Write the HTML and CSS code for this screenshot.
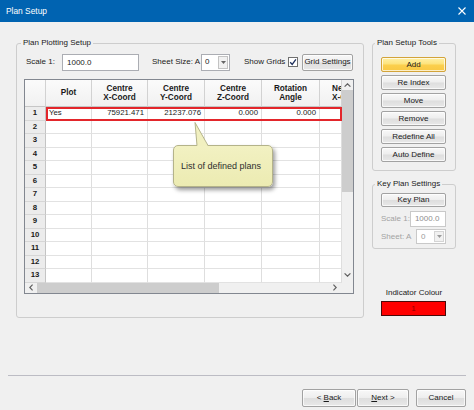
FILE: index.html
```html
<!DOCTYPE html>
<html>
<head>
<meta charset="utf-8">
<title>Plan Setup</title>
<link rel="stylesheet" href="styles.css">
</head>
<body>
<div class="window">
  <div class="titlebar">
    <span class="title">Plan Setup</span>
    <svg class="close" width="8" height="8" viewBox="0 0 8 8"><path d="M0.5 0.5L7.5 7.5M7.5 0.5L0.5 7.5" stroke="#ffffff" stroke-width="1.1" fill="none"/></svg>
  </div>
  <div class="content">
    <div class="main">
      <fieldset class="group plot-group">
        <legend>Plan Plotting Setup</legend>
        <div class="toolbar">
          <span class="lbl lbl-scale">Scale 1:</span>
          <div class="textbox tb-scale">1000.0</div>
          <span class="lbl lbl-sheet">Sheet Size: A</span>
          <div class="combo combo-sheet"><span class="combo-val">0</span><span class="drop"><svg width="5" height="3" viewBox="0 0 5 3"><path d="M0 0H5L2.5 3Z" fill="#666"/></svg></span></div>
          <span class="lbl lbl-grids">Show Grids</span>
          <span class="check"><svg width="10" height="10" viewBox="0 0 10 10"><rect x="0.5" y="0.5" width="9" height="9" fill="#ffffff" stroke="#707070"/><path d="M2.2 5.2L4.2 7.4L7.9 2.4" stroke="#1d2f5c" stroke-width="1.3" fill="none"/></svg></span>
          <button class="btn btn-grid">Grid Settings</button>
        </div>
        <div class="grid">
          <div class="grid-main">
            <div class="viewport">
              <div class="row head">
                <div class="cell c0"></div>
                <div class="cell c1"><span>Plot</span></div>
                <div class="cell c2"><span>Centre</span><span>X-Coord</span></div>
                <div class="cell c3"><span>Centre</span><span>Y-Coord</span></div>
                <div class="cell c4"><span>Centre</span><span>Z-Coord</span></div>
                <div class="cell c5"><span>Rotation</span><span>Angle</span></div>
                <div class="cell c6"><span>New</span><span>X-Coord</span></div>
              </div>
              <div class="row sel">
                <div class="cell c0 rh">1</div>
                <div class="cell c1">Yes</div>
                <div class="cell c2 num">75921.471</div>
                <div class="cell c3 num">21237.076</div>
                <div class="cell c4 num">0.000</div>
                <div class="cell c5 num">0.000</div>
                <div class="cell c6"></div>
              </div>
              <div class="row"><div class="cell c0 rh">2</div><div class="cell c1"></div><div class="cell c2"></div><div class="cell c3"></div><div class="cell c4"></div><div class="cell c5"></div><div class="cell c6"></div></div>
              <div class="row"><div class="cell c0 rh">3</div><div class="cell c1"></div><div class="cell c2"></div><div class="cell c3"></div><div class="cell c4"></div><div class="cell c5"></div><div class="cell c6"></div></div>
              <div class="row"><div class="cell c0 rh">4</div><div class="cell c1"></div><div class="cell c2"></div><div class="cell c3"></div><div class="cell c4"></div><div class="cell c5"></div><div class="cell c6"></div></div>
              <div class="row"><div class="cell c0 rh">5</div><div class="cell c1"></div><div class="cell c2"></div><div class="cell c3"></div><div class="cell c4"></div><div class="cell c5"></div><div class="cell c6"></div></div>
              <div class="row"><div class="cell c0 rh">6</div><div class="cell c1"></div><div class="cell c2"></div><div class="cell c3"></div><div class="cell c4"></div><div class="cell c5"></div><div class="cell c6"></div></div>
              <div class="row"><div class="cell c0 rh">7</div><div class="cell c1"></div><div class="cell c2"></div><div class="cell c3"></div><div class="cell c4"></div><div class="cell c5"></div><div class="cell c6"></div></div>
              <div class="row"><div class="cell c0 rh">8</div><div class="cell c1"></div><div class="cell c2"></div><div class="cell c3"></div><div class="cell c4"></div><div class="cell c5"></div><div class="cell c6"></div></div>
              <div class="row"><div class="cell c0 rh">9</div><div class="cell c1"></div><div class="cell c2"></div><div class="cell c3"></div><div class="cell c4"></div><div class="cell c5"></div><div class="cell c6"></div></div>
              <div class="row"><div class="cell c0 rh">10</div><div class="cell c1"></div><div class="cell c2"></div><div class="cell c3"></div><div class="cell c4"></div><div class="cell c5"></div><div class="cell c6"></div></div>
              <div class="row"><div class="cell c0 rh">11</div><div class="cell c1"></div><div class="cell c2"></div><div class="cell c3"></div><div class="cell c4"></div><div class="cell c5"></div><div class="cell c6"></div></div>
              <div class="row"><div class="cell c0 rh">12</div><div class="cell c1"></div><div class="cell c2"></div><div class="cell c3"></div><div class="cell c4"></div><div class="cell c5"></div><div class="cell c6"></div></div>
              <div class="row"><div class="cell c0 rh">13</div><div class="cell c1"></div><div class="cell c2"></div><div class="cell c3"></div><div class="cell c4"></div><div class="cell c5"></div><div class="cell c6"></div></div>
            </div>
            <div class="vscroll">
              <div class="arrow-up"><svg width="7" height="4" viewBox="0 0 7 4"><path d="M0.6 3.6L3.5 0.8L6.4 3.6" stroke="#606060" stroke-width="1.2" fill="none"/></svg></div>
              <div class="vthumb"></div>
              <div class="vspace"></div>
              <div class="arrow-down"><svg width="7" height="4" viewBox="0 0 7 4"><path d="M0.6 0.4L3.5 3.2L6.4 0.4" stroke="#606060" stroke-width="1.2" fill="none"/></svg></div>
            </div>
          </div>
          <div class="hscroll-row">
            <div class="hscroll">
              <div class="arrow-left"><svg width="4" height="7" viewBox="0 0 4 7"><path d="M3.6 0.6L0.8 3.5L3.6 6.4" stroke="#606060" stroke-width="1.2" fill="none"/></svg></div>
              <div class="hthumb"></div>
              <div class="hspace"></div>
              <div class="arrow-right"><svg width="4" height="7" viewBox="0 0 4 7"><path d="M0.4 0.6L3.2 3.5L0.4 6.4" stroke="#606060" stroke-width="1.2" fill="none"/></svg></div>
            </div>
            <div class="corner"></div>
          </div>
          <div class="tooltip">
            <svg class="tail" width="16" height="24" viewBox="0 0 16 24"><polygon points="1,0 3,24 14,24" fill="#f1f0c0"/><polyline points="3,23.5 1,0.5 14,23.5" fill="none" stroke="#b4b38a" stroke-width="1"/></svg>
            <span>List of defined plans</span>
          </div>
        </div>
      </fieldset>

      <div class="side">
        <fieldset class="group tools">
          <legend>Plan Setup Tools</legend>
          <div class="btn-stack">
            <button class="btn btn-side btn-add">Add</button>
            <button class="btn btn-side">Re Index</button>
            <button class="btn btn-side">Move</button>
            <button class="btn btn-side">Remove</button>
            <button class="btn btn-side">Redefine All</button>
            <button class="btn btn-side">Auto Define</button>
          </div>
        </fieldset>
        <fieldset class="group keyplan">
          <legend>Key Plan Settings</legend>
          <button class="btn btn-side btn-key">Key Plan</button>
          <div class="kp-row kp-scale">
            <span class="lbl disabled">Scale 1:</span>
            <div class="textbox tb-kp">1000.0</div>
          </div>
          <div class="kp-row kp-sheet">
            <span class="lbl disabled">Sheet: A</span>
            <div class="combo combo-kp"><span class="combo-val">0</span><span class="drop"><svg width="5" height="3" viewBox="0 0 5 3"><path d="M0 0H5L2.5 3Z" fill="#9a9a9a"/></svg></span></div>
          </div>
        </fieldset>
        <div class="indicator-label">Indicator Colour</div>
        <div class="swatch">1</div>
      </div>
    </div>
    <div class="separator"></div>
    <div class="footer">
      <button class="btn btn-foot btn-back">&lt; <u>B</u>ack</button>
      <button class="btn btn-foot btn-next"><u>N</u>ext &gt;</button>
      <button class="btn btn-foot btn-cancel">Cancel</button>
    </div>
  </div>
</div>
</body>
</html>
```

FILE: styles.css
```css
* {
  box-sizing: border-box;
}

html, body {
  margin: 0;
  padding: 0;
}

body {
  width: 474px;
  height: 410px;
  overflow: hidden;
  font-family: "Liberation Sans", Arial, sans-serif;
  font-size: 8px;
  color: #1a1a1a;
  background: #f0f0f0;
}

.window {
  width: 474px;
  height: 410px;
  display: flex;
  flex-direction: column;
  background: #f0f0f0;
}

/* Title bar */
.titlebar {
  height: 22px;
  flex: none;
  background: #0063b1;
  color: #ffffff;
  display: flex;
  align-items: center;
  justify-content: space-between;
  padding: 0 8px 0 6px;
}

.title {
  font-size: 8.4px;
  line-height: 10px;
}

.close {
  display: block;
}

/* Content */
.content {
  flex: 1;
  display: flex;
  flex-direction: column;
}

.main {
  display: flex;
  align-items: flex-start;
  padding: 16px 0 0 16px;
}

.group {
  margin: 0;
  border: 1px solid #cdcdcd;
  border-radius: 3px;
  min-width: 0;
}

.group legend {
  padding: 0 2px;
  line-height: 10px;
  font-size: 8px;
  color: #1a1a1a;
}

.plot-group {
  width: 348px;
  padding: 5px 9px 23px 7px;
}

.plot-group legend {
  margin-left: -3px;
}

/* Toolbar */
.toolbar {
  display: flex;
  align-items: center;
  height: 18px;
}

.lbl {
  white-space: nowrap;
  line-height: 10px;
}

.lbl-scale {
  width: 36px;
  margin-left: 2px;
}

.textbox {
  background: #ffffff;
  border: 1px solid #abadb3;
  white-space: nowrap;
}

.tb-scale {
  width: 77px;
  height: 17px;
  line-height: 15px;
  padding-left: 4px;
}

.lbl-sheet {
  width: 49px;
  margin-left: 13px;
}

.combo {
  display: flex;
  align-items: center;
  background: #ffffff;
  border: 1px solid #abadb3;
}

.combo-val {
  flex: 1;
  padding-left: 3px;
  line-height: 10px;
}

.drop {
  width: 10px;
  border: 1px solid #c3c3c3;
  background: #f1f1f1;
  display: flex;
  align-items: center;
  justify-content: center;
  margin-right: 1px;
}

.combo-sheet {
  width: 29px;
  height: 17px;
}

.combo-sheet .drop {
  height: 13px;
}

.lbl-grids {
  width: 43px;
  margin-left: 14px;
}

.check {
  display: flex;
  margin-left: 1px;
}

.check svg {
  display: block;
}

/* Buttons */
.btn {
  font-family: inherit;
  font-size: 8px;
  color: #1a1a1a;
  padding: 0;
  margin: 0;
  border: 1px solid #a2a2a2;
  border-radius: 2px;
  background: linear-gradient(#f8f8f8 0%, #eeeeee 48%, #dedede 52%, #e8e8e8 100%);
  box-shadow: inset 0 0 0 1px rgba(255, 255, 255, 0.7);
  line-height: 10px;
  white-space: nowrap;
}

.btn-grid {
  width: 51px;
  height: 17px;
  margin-left: 4px;
}

/* Grid */
.grid {
  position: relative;
  width: 330px;
  margin-top: 8px;
  border: 1px solid #828790;
  background: #ffffff;
}

.grid-main {
  display: flex;
}

.viewport {
  width: 317px;
  overflow: hidden;
}

.row {
  display: flex;
  height: 13.5px;
}

.cell {
  flex: none;
  height: 100%;
  overflow: hidden;
  white-space: nowrap;
  border-right: 1px solid #dedede;
  border-bottom: 1px solid #e2e2e2;
  padding: 0 3px;
  line-height: 12.5px;
  font-size: 7.8px;
}

.c0 { width: 21px; }
.c1 { width: 46px; }
.c2 { width: 56px; }
.c3 { width: 57px; }
.c4 { width: 57px; }
.c5 { width: 58px; }
.c6 { width: 22px; }

.num {
  text-align: right;
}

.rh {
  background: #ececec;
  font-weight: bold;
  text-align: center;
  padding: 0;
  border-right-color: #c4c4c4;
  border-bottom-color: #d6d6d6;
}

.row.head {
  height: 27px;
}

.head .cell {
  background: linear-gradient(#fbfbfb, #f1f1f1);
  font-weight: bold;
  font-size: 8.2px;
  line-height: 9.5px;
  display: flex;
  flex-direction: column;
  align-items: center;
  justify-content: center;
  border-bottom: 1px solid #c6c6c6;
  border-right-color: #d2d2d2;
  padding: 0;
}

.head .c6 {
  align-items: flex-start;
  padding-left: 12px;
}

.row.sel {
  position: relative;
}

.row.sel::after {
  content: "";
  position: absolute;
  left: 21px;
  right: 0;
  top: 0;
  bottom: 0;
  border: 2px solid #e3262b;
}

.vscroll {
  width: 11px;
  background: #f0f0f0;
  display: flex;
  flex-direction: column;
}

.arrow-up {
  height: 10px;
  display: flex;
  align-items: center;
  justify-content: center;
}

.vthumb {
  height: 102px;
  background: #cdcdcd;
}

.vspace {
  flex: 1;
}

.arrow-down {
  height: 16px;
  display: flex;
  align-items: center;
  justify-content: center;
}

.arrow-up svg, .arrow-down svg, .arrow-left svg, .arrow-right svg {
  display: block;
}

.hscroll-row {
  display: flex;
  height: 10px;
}

.hscroll {
  width: 317px;
  display: flex;
  background: #f0f0f0;
}

.arrow-left {
  width: 11px;
  display: flex;
  align-items: center;
  justify-content: center;
}

.hthumb {
  width: 182px;
  margin-left: 1px;
  background: #cdcdcd;
}

.hspace {
  flex: 1;
}

.arrow-right {
  width: 14px;
  display: flex;
  align-items: center;
  justify-content: center;
}

.corner {
  width: 11px;
  background: #f0f0f0;
}

/* Tooltip balloon */
.tooltip {
  position: absolute;
  left: 148px;
  top: 65px;
  width: 100px;
  height: 42px;
  background: linear-gradient(#f2f1c2, #ecebb2);
  border: 1px solid #b4b38a;
  border-radius: 5px;
  box-shadow: 2px 3px 4px rgba(0, 0, 0, 0.4);
  display: flex;
  align-items: center;
  padding-left: 7px;
  font-size: 9px;
  color: #2e2e2e;
  white-space: nowrap;
}

.tail {
  position: absolute;
  left: 20px;
  top: -24px;
  display: block;
}

/* Side panel */
.side {
  width: 84px;
  margin-left: 8px;
  display: flex;
  flex-direction: column;
}

.tools {
  width: 84px;
  padding: 9px 9px 8px 8px;
}

.tools legend,
.keyplan legend {
  margin-left: -6px;
}

.btn-stack {
  display: flex;
  flex-direction: column;
  gap: 3px;
}

.btn-side {
  width: 65px;
  height: 15px;
}

.btn-add {
  border-color: #d3a43a;
  background: linear-gradient(#fff1a6 0%, #fde27a 48%, #fbd04e 52%, #f9c843 100%);
}

.keyplan {
  width: 84px;
  margin-top: 8px;
  padding: 4px 9px 4px 8px;
}

.btn-key {
  height: 14px;
  display: block;
}

.kp-row {
  display: flex;
  align-items: center;
  justify-content: space-between;
  width: 65px;
}

.kp-scale {
  margin-top: 4px;
  height: 16px;
}

.kp-sheet {
  margin-top: 2px;
  height: 15px;
}

.disabled {
  color: #a3a3a3;
}

.tb-kp {
  width: 37px;
  height: 16px;
  line-height: 14px;
  padding-left: 4px;
  color: #8e8e8e;
  border-color: #c9c9c9;
}

.combo-kp {
  width: 30px;
  height: 15px;
  border-color: #c9c9c9;
  color: #9a9a9a;
}

.combo-kp .combo-val {
  padding-left: 4px;
}

.combo-kp .drop {
  height: 11px;
  border-color: #d4d4d4;
}

.indicator-label {
  margin-top: 39px;
  text-align: center;
  line-height: 10px;
}

.swatch {
  margin: 3px 0 0 9px;
  width: 65px;
  height: 15px;
  background: #ff0000;
  border: 1px solid #4a0a0a;
  color: #8c0000;
  text-align: center;
  line-height: 13px;
}

/* Footer */
.separator {
  margin: 57px 8px 0 8px;
  height: 1px;
  background: #bcbcc4;
}

.footer {
  display: flex;
  justify-content: flex-end;
  padding: 13px 8px 0 0;
}

.btn-foot {
  height: 18px;
}

.btn-back {
  width: 54px;
}

.btn-next {
  width: 52px;
  margin-left: 1px;
}

.btn-cancel {
  width: 50px;
  margin-left: 7px;
}
```
